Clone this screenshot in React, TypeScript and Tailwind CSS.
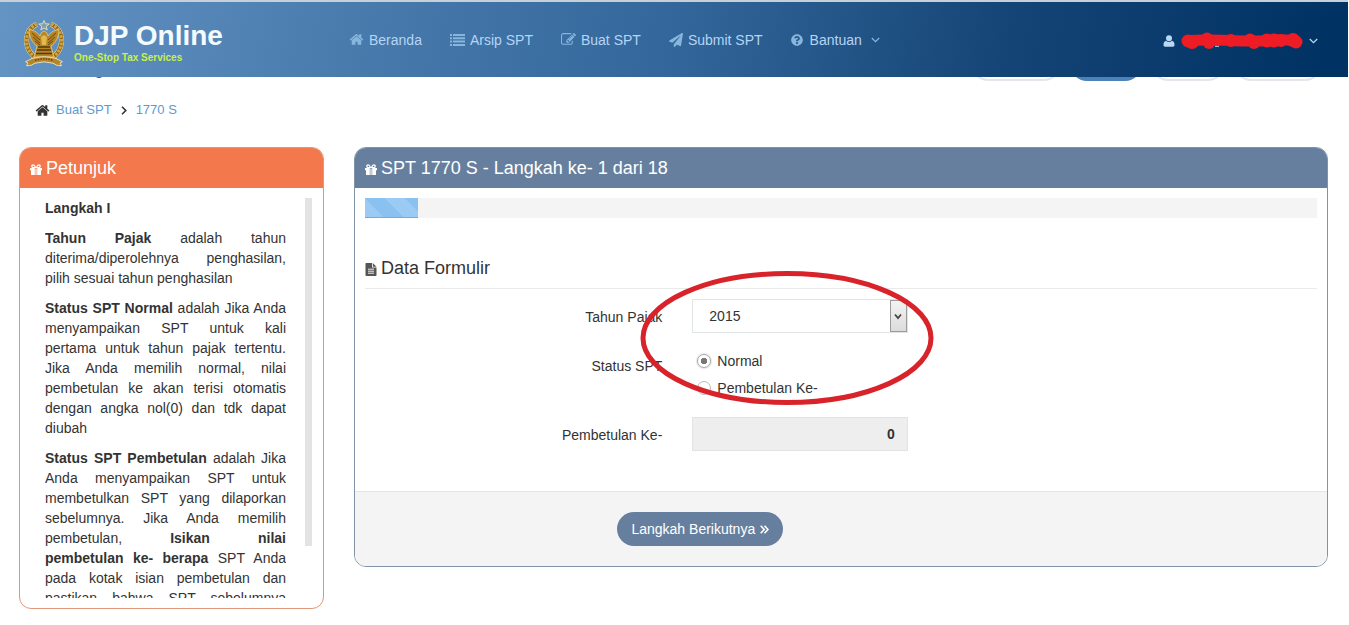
import React from "react";
import { FaPaperPlane, FaQuestionCircle } from "react-icons/fa";

function HomeIcon({ className = "" }: { className?: string }) {
  return (
    <svg viewBox="0 0 1792 1792" className={`size-[15px] ${className}`} fill="currentColor" aria-hidden="true">
      <path d="M1472 992v480q0 26-19 45t-45 19h-384v-384h-256v384h-384q-26 0-45-19t-19-45v-480q0-1 .5-3t.5-3l575-474 575 474q1 2 1 6zm223-69l-62 74q-8 9-21 11h-3q-13 0-21-7l-692-577-692 577q-12 8-24 7-13-2-21-11l-62-74q-8-10-7-23.500t11-21.500l719-599q32-26 76-26t76 26l244 204v-195q0-14 9-23t23-9h192q14 0 23 9t9 23v408l219 182q10 8 11 21.500t-7 23.500z" />
    </svg>
  );
}

function ListIcon() {
  return (
    <svg viewBox="0 0 15 12" className="h-3 w-[15px]" fill="currentColor" aria-hidden="true">
      <path d="M0 0h2v2H0zM3 0h12v2H3zM0 3.300h2v2H0zM3 3.300h12v2H3zM0 6.600h2v2H0zM3 6.600h12v2H3zM0 10h2v2H0zM3 10h12v2H3z" />
    </svg>
  );
}

function EditIcon() {
  return (
    <svg viewBox="0 0 1792 1792" className="size-[15px]" fill="currentColor" aria-hidden="true">
      <path d="M888 1184l116-116-152-152-116 116v56h96v96h56zm440-720q-16-16-33 1l-350 350q-17 17-1 33t33-1l350-350q17-17 1-33zm80 594v190q0 119-84.500 203.500t-203.500 84.500h-832q-119 0-203.500-84.500t-84.500-203.500v-832q0-119 84.500-203.500t203.500-84.500h832q63 0 117 25 15 7 18 23 3 17-9 29l-49 49q-14 14-32 8-23-6-45-6h-832q-66 0-113 47t-47 113v832q0 66 47 113t113 47h832q66 0 113-47t47-113v-126q0-13 9-22l64-64q15-15 35-7t20 29zm-96-738l288 288-672 672h-288v-288zm444 132l-92 92-288-288 92-92q28-28 68-28t68 28l152 152q28 28 28 68t-28 68z" />
    </svg>
  );
}

function AngleDown({ className = "" }: { className?: string }) {
  return (
    <svg viewBox="0 0 9 6" className={`h-1.5 w-[9px] ${className}`} fill="none" stroke="currentColor" strokeWidth="1.300" aria-hidden="true">
      <path d="M.8 1l3.700 3.600L8.200 1" />
    </svg>
  );
}

function AngleRight() {
  return (
    <svg viewBox="0 0 6 9" className="h-[9px] w-1.5" fill="none" stroke="#333" strokeWidth="1.600" aria-hidden="true">
      <path d="M1 .8l3.800 3.700L1 8.200" />
    </svg>
  );
}

function GiftIcon() {
  return (
    <svg viewBox="0 0 12 11" className="mt-[3px] h-[11px] w-3" fill="currentColor" aria-hidden="true">
      <path d="M0 4h4.800v2.300H0zM7.200 4H12v2.300H7.200zM1 6.300h3.800V11H1.600Q1 11 1 10.400zM7.200 6.300H11v4.100q0 .6-.6.6H7.200zM5.400 5h1.200v6H5.400z" />
      <path d="M5.600 3.700C4.800 1.500 4 .8 3.100.8 1.400.8 1.300 3.500 3.300 3.700zM6.400 3.700C7.200 1.500 8 .8 8.900.8c1.700 0 1.800 2.700-.2 2.900z" fill="none" stroke="currentColor" strokeWidth="1.300" />
    </svg>
  );
}

function FileIcon() {
  return (
    <svg viewBox="0 0 11 13" className="mt-[3px] h-[13px] w-3" aria-hidden="true">
      <path d="M0 .7Q0 0 .7 0H6.500v4.500H11v7.800q0 .7-.7.700H.7Q0 13 0 12.300z" fill="#555" />
      <path d="M7.300 0L11 3.700H7.300z" fill="#555" />
      <path d="M2.500 6.200h6M2.500 8.200h6M2.500 10.200h6" stroke="#fff" strokeWidth=".9" />
    </svg>
  );
}

function Emblem() {
  return (
    <svg viewBox="0 0 40 48" className="h-[48px] w-10 shrink-0" aria-hidden="true">
      <path d="M13 5C5 9 2 16 2.500 23S7 36 14 40M27 5c8 4 11 11 10.500 18S33 36 26 40" fill="none" stroke="#efe3b0" strokeWidth="5" />
      <path d="M13 5C5 9 2 16 2.500 23S7 36 14 40M27 5c8 4 11 11 10.500 18S33 36 26 40" fill="none" stroke="#8d6216" strokeWidth="4" />
      <path d="M13 5C5 9 2 16 2.500 23S7 36 14 40M27 5c8 4 11 11 10.500 18S33 36 26 40" fill="none" stroke="#d3a541" strokeWidth="3" strokeDasharray="2.600 1.200" />
      <path d="M5 11c4-.5 8 2 11 6l1.500-3.500 2.500-1.500 2.500 1.500L24 17c3-4 7-6.500 11-6-.5 7-3 13-8 16l3 11H10l3-11c-5-3-7.500-9-8-16z" fill="#b98524" stroke="#ecd58a" strokeWidth=".7" />
      <path d="M8 14l8 7M9 18l7 6M11 22l5 4M32 14l-8 7M31 18l-7 6M29 22l-5 4" stroke="#6b4910" strokeWidth="1" fill="none" />
      <path d="M14 28h12M13 31h14M12 34.500h16" stroke="#55380c" strokeWidth="1.400" fill="none" />
      <path d="M17 18l3-2 3 2-1 8h-4z" fill="#e0b94f" />
      <path d="M20 1.500l1.400 3.300 3.800.2-3 2.300 1 3.700L20 9l-3.200 2 1-3.700-3-2.300 3.800-.2z" fill="#7f9fb0" stroke="#efe3b0" strokeWidth=".9" />
      <path d="M8 39.500Q20 36 32 39.500l6.500 3.200-2.500 1.300 1.500 2.800q-5 .2-8.500-2.600Q20 41.500 11 44.200 7.500 47 2.500 46.800L4 44l-2.500-1.300z" fill="#b6852b" stroke="#f2e6b5" strokeWidth=".9" />
      <path d="M11 41.300Q20 38.500 29 41.300" stroke="#5f400e" strokeWidth="1.300" strokeDasharray="1.500 1.200" fill="none" />
    </svg>
  );
}

function UserIcon() {
  return (
    <svg viewBox="0 0 12 12" className="mt-0.5 size-[12px]" fill="currentColor" aria-hidden="true">
      <circle cx="6" cy="3.200" r="3" />
      <path d="M3 5.800C1 6.500.5 8 .5 10c0 1.200.6 1.700 1.600 1.700h7.800c1 0 1.600-.5 1.600-1.700 0-2-.5-3.500-2.500-4.200-1.600 1.600-4.400 1.600-6 0z" />
    </svg>
  );
}

function Scribble() {
  return (
    <svg viewBox="0 0 122 18" className="mt-0.5 h-[18px] w-[122px]" role="img" aria-label="Nama pengguna">
      <path d="M34 14.200h4" stroke="#e8eef5" strokeWidth="1" />
      <path
        d="M7 9Q12 8 27 8T50 8.500T75 9T95 8T114 9"
        stroke="#ee1c25"
        strokeWidth="11"
        strokeLinecap="round"
        fill="none"
      />
      <g fill="#ee1c25">
        <circle cx="7" cy="9" r="6.500" />
        <circle cx="11" cy="10" r="7" />
        <circle cx="26" cy="7" r="6.500" />
        <circle cx="28" cy="11" r="6" />
        <circle cx="50" cy="8.500" r="6.500" />
        <circle cx="69" cy="8" r="6.500" />
        <circle cx="73" cy="11" r="6" />
        <circle cx="86" cy="8.500" r="7" />
        <circle cx="93" cy="8.500" r="7" />
        <circle cx="100" cy="8.500" r="6.500" />
        <circle cx="112" cy="8" r="7" />
        <circle cx="115" cy="10" r="6.500" />
      </g>
    </svg>
  );
}

const navItems = [
  { label: "Beranda", icon: <HomeIcon /> },
  { label: "Arsip SPT", icon: <ListIcon /> },
  { label: "Buat SPT", icon: <EditIcon /> },
  { label: "Submit SPT", icon: <FaPaperPlane size={14} /> },
];

function Header() {
  return (
    <header className="relative z-10 mr-px flex h-[77px] items-center border-t-2 border-[#c5d0d9] bg-[linear-gradient(100deg,#6494c4_0%,#4a7cae_25%,#33669a_50%,#144475_75%,#003264_98%)] bg-origin-border pr-[30px] pl-[24px] text-sm text-[#b4d5f5]">
      <a href="#" className="mt-1.5 flex w-[325px] items-center gap-[10px]">
        <Emblem />
        <span className="-mt-0.5 flex flex-col whitespace-nowrap">
          <span className="text-[28px] leading-[32px] font-bold text-[#f3fbff]">DJP Online</span>
          <span className="text-[10px] leading-3 font-bold text-[#c8f04c]">One-Stop Tax Services</span>
        </span>
      </a>
      <nav className="flex items-center gap-7">
        {navItems.map((item) => (
          <a key={item.label} href="#" className="flex items-center gap-[5px]">
            <span className="text-[#86b6de]">{item.icon}</span>
            {item.label}
          </a>
        ))}
        <a href="#" className="flex items-center gap-[7px]">
          <FaQuestionCircle size={12} className="text-[#86b6de]" />
          Bantuan
          <AngleDown className="ml-0.5 text-[#86b6de]" />
        </a>
      </nav>
      <button type="button" className="ml-auto flex items-center gap-[6px] text-[#b9d8f3]">
        <UserIcon />
        <Scribble />
        <AngleDown className="mt-0.5" />
      </button>
    </header>
  );
}

function PageHeading() {
  return (
    <div className="-mt-[30px] flex h-[34px] items-start justify-end gap-[9px] pr-[27px] pl-[95px]" aria-hidden="true">
      <span className="mr-auto h-[31px] w-2 rounded-b-full bg-[#555]" />
      <span className="h-full w-[90px] rounded-full border border-b-2 border-[#d9e2ee] border-b-[#e3e6ea]" />
      <span className="h-full w-[72px] rounded-full bg-[#4b83b8]" />
      <span className="h-full w-[74px] rounded-full border border-b-2 border-[#d9e2ee] border-b-[#e3e6ea]" />
      <span className="h-full w-[88px] rounded-full border border-b-2 border-[#d9e2ee] border-b-[#e3e6ea]" />
    </div>
  );
}

function Petunjuk() {
  return (
    <aside className="w-[305px] shrink-0 overflow-hidden rounded-[12px] border border-[#e0987a] bg-white">
      <h2 className="flex h-10 items-center gap-1 bg-[#f3784b] px-[10px] text-lg text-white">
        <GiftIcon />
        Petunjuk
      </h2>
      <div className="flex h-[420px] justify-between pt-[10px] pr-[11px] pb-[10px] pl-[25px]">
        <div className="flex w-[241px] flex-col gap-[10px] overflow-hidden text-justify text-sm text-[#333]">
          <p className="font-bold">Langkah I</p>
          <p>
            <b>Tahun Pajak</b> adalah tahun diterima/diperolehnya penghasilan, pilih sesuai tahun penghasilan
          </p>
          <p>
            <b>Status SPT Normal</b> adalah Jika Anda menyampaikan SPT untuk kali pertama untuk tahun pajak tertentu. Jika
            Anda memilih normal, nilai pembetulan ke akan terisi otomatis dengan angka nol(0) dan tdk dapat diubah
          </p>
          <p className="[text-align-last:justify]">
            <b>Status SPT Pembetulan</b> adalah Jika Anda menyampaikan SPT untuk membetulkan SPT yang dilaporkan
            sebelumnya. Jika Anda memilih pembetulan, <b>Isikan nilai pembetulan&nbsp;ke- berapa</b> SPT Anda pada kotak
            isian pembetulan dan pastikan bahwa SPT sebelumnya
          </p>
        </div>
        <div className="h-[348px] w-[7px] bg-[#e3e3e3]" />
      </div>
    </aside>
  );
}

function Formulir() {
  return (
    <section className="min-w-0 flex-1 overflow-hidden rounded-[12px] border border-[#8293a8] bg-white">
      <h2 className="flex h-10 items-center gap-1 bg-[#677f9f] px-[10px] text-lg text-white">
        <GiftIcon />
        SPT 1770 S - Langkah ke- 1 dari 18
      </h2>
      <div className="px-[10px] pt-[10px]">
        <div className="h-5 bg-[#f4f4f4]">
          <div className="h-5 w-1/18 border-b border-[#76a9d6] bg-[linear-gradient(45deg,#9bcbf5_25%,#89c1f1_25%,#89c1f1_50%,#9bcbf5_50%,#9bcbf5_75%,#89c1f1_75%)] bg-size-[40px_40px] bg-position-[0_20px]" />
        </div>
        <h3 className="mt-[30px] flex h-[41px] items-center gap-1 border-b border-[#eaeaea] text-lg text-[#333]">
          <FileIcon />
          Data Formulir
        </h3>
        <form className="relative -mx-[15px] pt-[10px] pb-10 text-sm text-[#333]">
          <div className="flex h-[34px] items-center">
            <label htmlFor="tahun" className="w-1/3 px-[15px] pt-0.5 text-right">
              Tahun Pajak
            </label>
            <div className="w-1/4 px-[15px]">
              <div className="relative">
                <select
                  id="tahun"
                  defaultValue="2015"
                  className="block h-[34px] w-full appearance-none border border-[#e1e4e5] bg-white pl-4"
                >
                  <option>2015</option>
                </select>
                <span className="pointer-events-none absolute top-px right-px flex h-8 w-[17px] items-center justify-center border border-[#9b9b9b] bg-linear-to-b from-[#f3f3f3] to-[#dcdcdc]">
                  <svg viewBox="0 0 8 7" className="h-[7px] w-2" fill="none" stroke="#444" strokeWidth="1.800" aria-hidden="true">
                    <path d="M1 1.500l3 3.500 3-3.500" />
                  </svg>
                </span>
              </div>
            </div>
          </div>
          <div role="radiogroup" aria-labelledby="status-label" className="mt-[15px] flex">
            <span id="status-label" className="w-1/3 px-[15px] pt-2 text-right">
              Status SPT
            </span>
            <div className="flex w-1/3 flex-col gap-[7px] px-[15px] pt-[3px] pl-[20px]">
              <label className="flex items-center gap-[6px]">
                <input
                  type="radio"
                  name="status"
                  defaultChecked
                  className="size-[14px] appearance-none rounded-full border border-[#aaa] bg-white shadow-[0_0_1px_1px_#e8e8e8] checked:bg-[radial-gradient(circle,#777_0_3px,#fff_3px)]"
                />
                Normal
              </label>
              <label className="flex items-center gap-[6px]">
                <input
                  type="radio"
                  name="status"
                  className="size-[14px] appearance-none rounded-full border border-[#bbb] bg-white checked:bg-[radial-gradient(circle,#777_0_3px,#fff_3px)]"
                />
                Pembetulan Ke-
              </label>
            </div>
          </div>
          <div className="mt-[19px] flex h-[34px] items-center">
            <label htmlFor="pembetulan" className="w-1/3 px-[15px] pt-0.5 text-right">
              Pembetulan Ke-
            </label>
            <div className="w-1/4 px-[15px]">
              <input
                id="pembetulan"
                readOnly
                defaultValue="0"
                className="block h-[34px] w-full border border-[#e1e4e5] bg-[#eee] px-3 text-right font-bold"
              />
            </div>
          </div>
          <svg
            viewBox="0 0 294 136"
            className="pointer-events-none absolute -top-5 left-[290px] h-[136px] w-[294px]"
            fill="none"
            stroke="#d9232b"
            strokeWidth="5"
            aria-hidden="true"
          >
            <ellipse cx="147" cy="69" rx="144" ry="64.500" />
          </svg>
        </form>
      </div>
      <div className="border-t border-[#e5e5e5] bg-[#f4f4f4] py-5 pl-[27%]">
        <button type="button" className="flex h-[34px] items-center gap-[5px] rounded-full bg-[#677f9f] px-[14px] text-sm text-white">
          Langkah Berikutnya
          <svg viewBox="0 0 9 9" className="mt-px size-[9px]" fill="none" stroke="currentColor" strokeWidth="1.600" aria-hidden="true">
            <path d="M.7.800l3.500 3.700L.7 8.200M4.500.800L8 4.500 4.500 8.200" />
          </svg>
        </button>
      </div>
    </section>
  );
}

export default function App() {
  return (
    <div className="min-h-screen bg-white font-['Liberation_Sans',Arial,sans-serif]">
      <Header />
      <PageHeading />
      <div className="flex items-center gap-[9px] pt-[19px] pl-[35px] text-[13px] leading-5 text-[#5b9bd1]">
        <span className="flex items-center gap-[6px]">
          <HomeIcon className="text-[#333]" />
          <a href="#">Buat SPT</a>
        </span>
        <AngleRight />
        <a href="#">1770 S</a>
      </div>
      <main className="flex items-start gap-[30px] pt-[27px] pr-[21px] pl-[19px]">
        <Petunjuk />
        <Formulir />
      </main>
    </div>
  );
}
